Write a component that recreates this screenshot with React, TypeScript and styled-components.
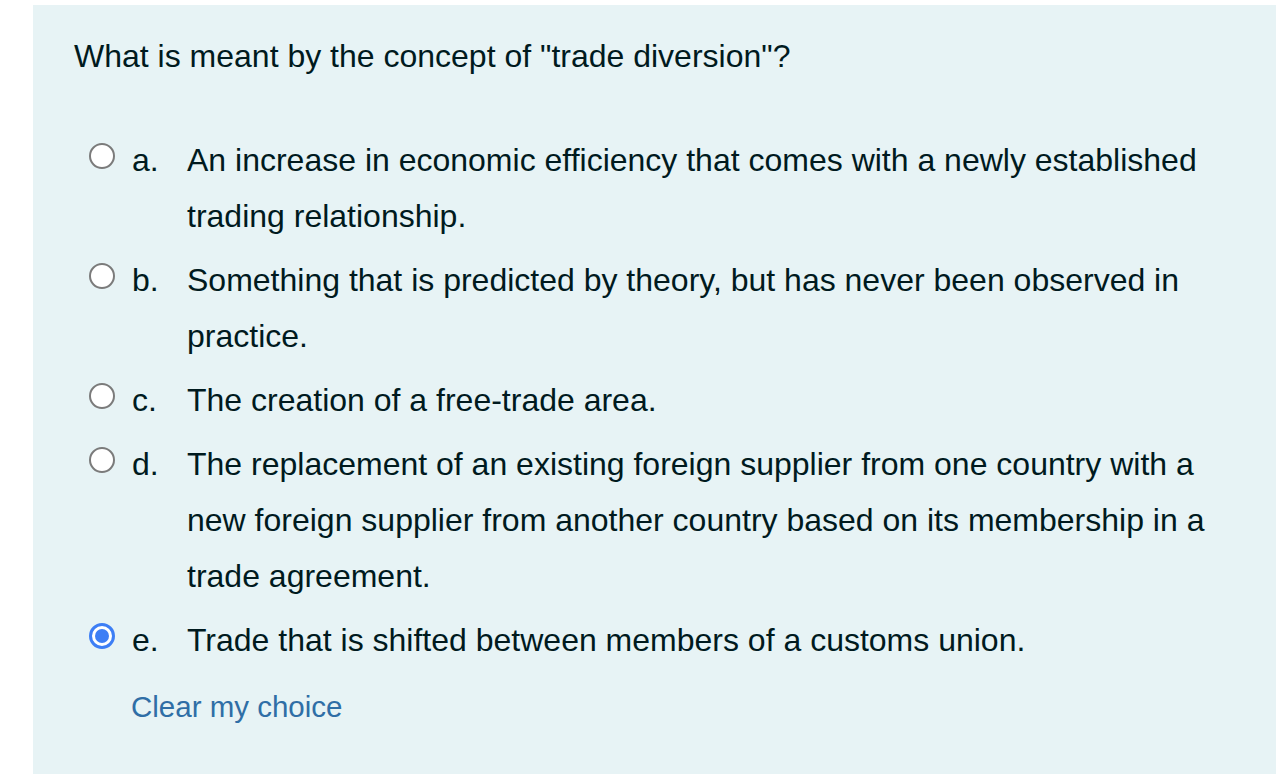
import React, { useState } from "react";
import styled, { createGlobalStyle } from "styled-components";

const GlobalStyle = createGlobalStyle`
  html, body {
    margin: 0;
    padding: 0;
    background: #ffffff;
  }
  body {
    font-family: "Liberation Sans", Arial, Helvetica, sans-serif;
    color: #001a1e;
  }
`;

const Page = styled.div`
  padding: 5px 0 0 33px;
  min-height: 774px;
  box-sizing: border-box;
  display: flex;
`;

const Panel = styled.div`
  flex: 1;
  background: #e7f3f5;
  padding: 23px 51px 40px 41px;
  min-height: 769px;
  box-sizing: border-box;
`;

const Question = styled.div`
  font-size: 32px;
  line-height: 56px;
  margin: 0 0 48px 0;
`;

const Answers = styled.div`
  display: flex;
  flex-direction: column;
  gap: 8px;
  padding-left: 15px;
`;

const Row = styled.label`
  display: grid;
  grid-template-columns: 43px 55px 1fr;
  align-items: start;
  font-size: 32px;
  line-height: 56px;
  cursor: pointer;
`;

const Radio = styled.span<{ $checked: boolean }>`
  position: relative;
  display: block;
  width: 26px;
  height: 26px;
  margin-top: 11px;
  box-sizing: border-box;
  border-radius: 50%;
  background: #ffffff;
  border: ${(p) => (p.$checked ? "3px solid #3d7ef5" : "2px solid #7b7b7b")};

  &::after {
    content: "";
    display: ${(p) => (p.$checked ? "block" : "none")};
    position: absolute;
    left: 3px;
    top: 3px;
    right: 3px;
    bottom: 3px;
    border-radius: 50%;
    background: #3d7ef5;
  }
`;

const Letter = styled.span`
  display: block;
`;

const AnswerText = styled.span`
  display: block;
`;

const ClearLink = styled.a`
  display: inline-block;
  margin: 11px 0 0 57px;
  font-size: 29.5px;
  line-height: 56px;
  color: #2f6ea6;
  text-decoration: none;
  cursor: pointer;
`;

const options = [
  {
    key: "a",
    text: "An increase in economic efficiency that comes with a newly established trading relationship.",
  },
  {
    key: "b",
    text: "Something that is predicted by theory, but has never been observed in practice.",
  },
  { key: "c", text: "The creation of a free-trade area." },
  {
    key: "d",
    text: "The replacement of an existing foreign supplier from one country with a new foreign supplier from another country based on its membership in a trade agreement.",
  },
  { key: "e", text: "Trade that is shifted between members of a customs union." },
];

export default function App() {
  const [selected, setSelected] = useState<string | null>("e");
  return (
    <>
      <GlobalStyle />
      <Page>
        <Panel>
          <Question>What is meant by the concept of "trade diversion"?</Question>
          <Answers>
            {options.map((o) => (
              <Row key={o.key} onClick={() => setSelected(o.key)}>
                <Radio $checked={selected === o.key} />
                <Letter>{o.key}.</Letter>
                <AnswerText>{o.text}</AnswerText>
              </Row>
            ))}
          </Answers>
          <ClearLink onClick={() => setSelected(null)}>Clear my choice</ClearLink>
        </Panel>
      </Page>
    </>
  );
}
